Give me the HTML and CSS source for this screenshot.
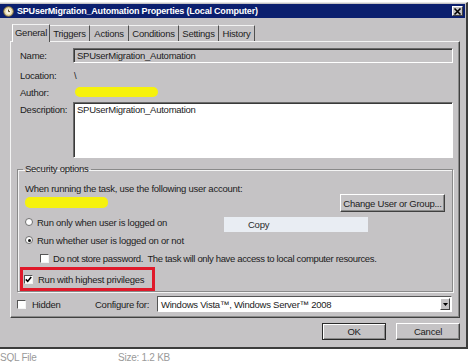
FILE: index.html
```html
<!DOCTYPE html>
<html lang="en">
<head>
    <meta charset="UTF-8">
    <title>SPUserMigration_Automation Properties</title>
    <link rel="stylesheet" href="styles.css">
</head>
<body>

    <div class="window">
        <div class="titlebar">
            <svg class="title-icon" width="11" height="11" viewBox="0 0 11 11">
                <circle cx="5.5" cy="5.5" r="4.8" fill="#e9dcae" stroke="#7d6a35" stroke-width="1"/>
                <circle cx="5.5" cy="5.5" r="2.6" fill="#f7f3e6"/>
                <path d="M5.5 3.6 V5.6 H7" stroke="#5a4a20" stroke-width="1" fill="none"/>
            </svg>
            <span class="title">SPUserMigration_Automation Properties (Local Computer)</span>
            <span class="close">
                <svg width="9" height="9" viewBox="0 0 9 9">
                    <path d="M1.5 1.5 L7.5 7.5 M7.5 1.5 L1.5 7.5" stroke="#000" stroke-width="1.6"/>
                </svg>
            </span>
        </div>

        <div class="tabs">
            <span class="tab active tab-general">General</span>
            <span class="tab tab-triggers">Triggers</span>
            <span class="tab tab-actions">Actions</span>
            <span class="tab tab-conditions">Conditions</span>
            <span class="tab tab-settings">Settings</span>
            <span class="tab tab-history">History</span>
        </div>

        <div class="panel">
            <div class="row name-row">
                <span class="label">Name:</span>
                <div class="field readonly">SPUserMigration_Automation</div>
            </div>
            <div class="row info-row location-row">
                <span class="label">Location:</span>
                <span class="value">\</span>
            </div>
            <div class="row info-row">
                <span class="label">Author:</span>
                <span class="marker author-mark"></span>
            </div>
            <div class="row desc-row">
                <span class="label">Description:</span>
                <div class="field textarea">SPUserMigration_Automation</div>
            </div>

            <fieldset class="security">
                <legend>Security options</legend>
                <div class="account-text">When running the task, use the following user account:</div>
                <div class="account-row">
                    <span class="marker user-mark"></span>
                    <span class="btn change-btn">Change User or Group...</span>
                </div>
                <div class="option first-option">
                    <span class="radio"></span>Run only when user is logged on
                    <span class="copy-menu">Copy</span>
                </div>
                <div class="option">
                    <span class="radio checked"></span>Run whether user is logged on or not
                </div>
                <div class="option sub-option">
                    <span class="check"></span>Do not store password.&nbsp; The task will only have access to local computer resources.
                </div>
                <div class="option highlight">
                    <span class="check">
                        <svg width="7" height="7" viewBox="0 0 7 7">
                            <path d="M0.8 3.4 L2.7 5.4 L6.2 1" stroke="#000" stroke-width="1.6" fill="none"/>
                        </svg>
                    </span>Run with highest privileges
                </div>
            </fieldset>

            <div class="config-row">
                <span class="hidden-opt"><span class="check"></span>Hidden</span>
                <span class="config-label">Configure for:</span>
                <div class="select">
                    Windows Vista&trade;, Windows Server&trade; 2008
                    <span class="arrow">
                        <svg width="5" height="3" viewBox="0 0 5 3"><path d="M0 0 H5 L2.5 3 Z" fill="#000"/></svg>
                    </span>
                </div>
            </div>
        </div>

        <div class="dialog-buttons">
            <span class="btn default-btn">OK</span>
            <span class="btn">Cancel</span>
        </div>
    </div>

    <div class="behind">
        <span class="behind-name">SQL File</span>
        <span>Size: 1.2 KB</span>
    </div>

</body>
</html>
```

FILE: styles.css
```css
* {
    box-sizing: border-box;
}
body {
    margin: 0;
    background: #ffffff;
    font-family: "Liberation Sans", Arial, sans-serif;
    font-size: 9.5px;
    letter-spacing: -0.25px;
    color: #1c1c1c;
    overflow: hidden;
}
.window {
    width: 468px;
    height: 347px;
    margin-top: 2px;
    background: #c5c3c5;
    border-top: 1px solid #e6e6e6;
    border-right: 2px solid #3c3c3c;
    border-bottom: 2px solid #3c3c3c;
    display: flex;
    flex-direction: column;
}
.titlebar {
    height: 14px;
    margin: 1px 1px 0 0;
    padding-left: 3px;
    background: #0b1f6f;
    color: #ffffff;
    display: flex;
    align-items: center;
    font-size: 9px;
    font-weight: bold;
    letter-spacing: -0.2px;
}
.title-icon {
    margin-right: 3px;
    flex: none;
}
.close {
    margin-left: auto;
    margin-right: 2px;
    width: 11px;
    height: 10px;
    background: #c5c3c5;
    border: 1px solid;
    border-color: #ffffff #404040 #404040 #ffffff;
    display: flex;
    align-items: center;
    justify-content: center;
}

/* tabs */
.tabs {
    display: flex;
    align-items: flex-end;
    height: 23px;
    padding-left: 12px;
}
.tab {
    height: 16px;
    line-height: 15px;
    text-align: center;
    border-top: 1px solid #f2f2f2;
    border-right: 1px solid #505050;
}
.tab.active {
    height: 18px;
    line-height: 16px;
    margin-bottom: -1px;
    border-left: 1px solid #ffffff;
    background: #c5c3c5;
    position: relative;
    z-index: 1;
}
.tab-general { width: 38px; }
.tab-triggers { width: 40px; }
.tab-actions { width: 39px; }
.tab-conditions { width: 50px; }
.tab-settings { width: 40px; }
.tab-history { width: 36px; }

.panel {
    margin-left: 10px;
    width: 450px;
    height: 277px;
    padding: 6px 0 0 9px;
    border: 1px solid;
    border-color: #f4f4f4 #404040 #404040 #f4f4f4;
    box-shadow: inset -1px -1px 0 #8a8a8a;
}
.row {
    display: flex;
    align-items: center;
}
.label {
    width: 53px;
    flex: none;
}
.field {
    width: 380px;
    border: 1px solid;
    border-color: #6a6a6a #ffffff #ffffff #6a6a6a;
    box-shadow: inset 1px 1px 0 #3a3a3a;
    padding-left: 3px;
}
.name-row .field {
    height: 15px;
    line-height: 13px;
}
.info-row {
    height: 14px;
    margin-top: 3px;
}
.location-row {
    margin-top: 5px;
}
.value {
    padding-left: 1px;
}
.marker {
    background: #f6f20c;
    border-radius: 5px;
}
.author-mark {
    width: 83px;
    height: 10px;
    margin-left: 2px;
}
.desc-row {
    margin-top: 3px;
    align-items: flex-start;
}
.desc-row .label {
    line-height: 14px;
    padding-top: 1px;
}
.field.textarea {
    height: 56px;
    background: #ffffff;
    padding-top: 1px;
    line-height: 12px;
}

/* security options */
.security {
    margin: 5px 0 0 -3px;
    width: 436px;
    padding: 0 7px 0 7px;
    border: 1px solid #8a8a8a;
    box-shadow: 1px 1px 0 #f4f4f4, inset 1px 1px 0 #f4f4f4;
}
.security legend {
    padding: 0 2px;
    margin-left: -2px;
    line-height: 12px;
}
.account-text {
    margin-top: 8px;
    line-height: 12px;
}
.account-row {
    display: flex;
    align-items: flex-start;
    justify-content: space-between;
    height: 18px;
    margin-top: -1px;
}
.user-mark {
    width: 83px;
    height: 11px;
    margin-top: 3px;
}
.btn {
    display: flex;
    align-items: center;
    justify-content: center;
    background: #c5c3c5;
    border: 1px solid;
    border-color: #ffffff #404040 #404040 #ffffff;
    box-shadow: inset -1px -1px 0 #8a8a8a;
}
.change-btn {
    width: 105px;
    height: 18px;
}
.option {
    display: flex;
    align-items: center;
    height: 14px;
    margin-top: 4px;
    position: relative;
}
.first-option {
    margin-top: 3px;
}
.radio {
    width: 8px;
    height: 8px;
    border-radius: 50%;
    background: #ffffff;
    border: 1px solid #6f6f6f;
    margin-right: 4px;
    display: flex;
    align-items: center;
    justify-content: center;
}
.radio.checked::after {
    content: "";
    width: 3px;
    height: 3px;
    border-radius: 50%;
    background: #111111;
}
.check {
    width: 9px;
    height: 9px;
    flex: none;
    background: #ffffff;
    border: 1px solid;
    border-color: #555555 #f4f4f4 #f4f4f4 #555555;
    display: flex;
    align-items: center;
    justify-content: center;
}
.sub-option {
    padding-left: 15px;
    letter-spacing: -0.35px;
}
.sub-option .check {
    margin-right: 4px;
}
.copy-menu {
    position: absolute;
    left: 199px;
    top: 2px;
    width: 144px;
    height: 15px;
    padding-left: 24px;
    line-height: 15px;
    background: #e9edf3;
    color: #2a2a2a;
}
.highlight {
    height: 24px;
    width: 135px;
    margin: 2px 0 0 -5px;
    padding-left: 1px;
    border: 3px solid #e0192a;
}
.highlight .check {
    margin-right: 5px;
}

/* bottom of the tab */
.config-row {
    display: flex;
    align-items: center;
    margin-top: 4px;
    height: 16px;
}
.hidden-opt {
    display: flex;
    align-items: center;
    width: 78px;
    margin-left: -3px;
}
.hidden-opt .check {
    margin-right: 6px;
}
.config-label {
    width: 62px;
}
.select {
    width: 295px;
    height: 16px;
    background: #ffffff;
    border: 1px solid;
    border-color: #555555 #ffffff #ffffff #555555;
    padding-left: 3px;
    display: flex;
    align-items: center;
    justify-content: space-between;
}
.arrow {
    width: 10px;
    height: 12px;
    margin-right: 1px;
    background: #c5c3c5;
    border: 1px solid;
    border-color: #ffffff #404040 #404040 #ffffff;
    display: flex;
    align-items: center;
    justify-content: center;
}

.dialog-buttons {
    display: flex;
    justify-content: flex-end;
    gap: 10px;
    margin-top: 5px;
    padding-right: 6px;
}
.dialog-buttons .btn {
    width: 64px;
    height: 17px;
}
.default-btn {
    border-color: #2a2a2a;
    box-shadow: inset 1px 1px 0 #ffffff, inset -1px -1px 0 #8a8a8a;
}

.behind {
    display: flex;
    height: 12px;
    margin-top: 3px;
    font-size: 10px;
    color: #9a9a9a;
}
.behind-name {
    width: 118px;
}
```
